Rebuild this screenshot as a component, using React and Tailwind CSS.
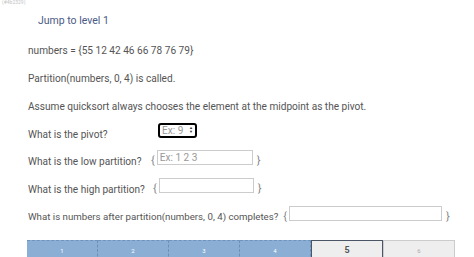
import React from 'react'

const Segment = ({ n, state }) => {
    if (state === 'done') {
        return (
            <div className="flex-1 flex items-center justify-center bg-[#8aaed4] border-t border-[#6f93bd] border-r border-r-[#6d90b8] border-dashed text-[6px] text-white">
                {n}
            </div>
        )
    }
    if (state === 'current') {
        return (
            <div className="flex-1 flex items-center justify-center bg-[#eeeeee] border border-[#4a5566] text-[9px] font-bold text-[#555]">
                {n}
            </div>
        )
    }
    return (
        <div className="flex-1 flex items-center justify-center bg-[#eeeeee] border border-[#cccccc] text-[6px] text-[#aaa]">
            {n}
        </div>
    )
}

const Braces = ({ gap, width, placeholder }) => (
    <>
        <span className="text-[11px] text-[#888] -mt-[1px]" style={{ marginLeft: gap }}>{'{'}</span>
        <div
            className="ml-[2px] -mt-[4px] h-[15px] border border-[#ccc] flex items-center px-[2px] text-[#999]"
            style={{ width }}
        >
            {placeholder}
        </div>
        <span className="ml-[4px] text-[11px] text-[#888] -mt-[1px]">{'}'}</span>
    </>
)

const App = () => {
    return (
        <div className="w-[474px] h-[257px] overflow-hidden bg-white text-[#555] text-[10.1px] font-['Roboto',sans-serif]">
            <div className="h-[6px] pl-[2px] text-[5px] leading-[5px] text-[#c4c4c4]">(#4b2329)</div>

            <div className="pl-[38px] pt-[7px] text-[10.5px] text-[#4a5a85]">Jump to level 1</div>

            <div className="pl-[28px] pt-[14px] flex flex-col whitespace-nowrap">
                <p className="h-[28px]">numbers = {'{'}55 12 42 46 66 78 76 79{'}'}</p>
                <p className="h-[28px]">Partition(numbers, 0, 4) is called.</p>
                <p className="h-[28px]">Assume quicksort always chooses the element at the midpoint as the pivot.</p>

                <div className="h-[27px] flex items-start">
                    <span className="w-[130px]">What is the pivot?</span>
                    <div className="-mt-[4px] w-[39px] h-[15px] border-2 border-black rounded-[3px] flex items-center justify-between px-[2px] text-[#999]">
                        <span>Ex: 9</span>
                        <span className="flex flex-col text-[4px] leading-[4px] text-[#333]">
                            <span>▲</span>
                            <span>▼</span>
                        </span>
                    </div>
                </div>

                <div className="h-[28px] flex items-start">
                    <span className="w-[123px]">What is the low partition?</span>
                    <Braces gap="0px" width="96px" placeholder="Ex: 1 2 3" />
                </div>

                <div className="h-[28px] flex items-start">
                    <span className="w-[125px]">What is the high partition?</span>
                    <Braces gap="0px" width="95px" />
                </div>

                <div className="h-[28px] flex items-start">
                    <span className="text-[9.7px]">What is numbers after partition(numbers, 0, 4) completes?</span>
                    <Braces gap="5px" width="153px" />
                </div>
            </div>

            <div className="ml-[27px] mt-[2px] w-[428px] h-[21px] flex">
                <Segment n="1" state="done" />
                <Segment n="2" state="done" />
                <Segment n="3" state="done" />
                <Segment n="4" state="done" />
                <Segment n="5" state="current" />
                <Segment n="6" state="todo" />
            </div>
        </div>
    )
}

export default App
